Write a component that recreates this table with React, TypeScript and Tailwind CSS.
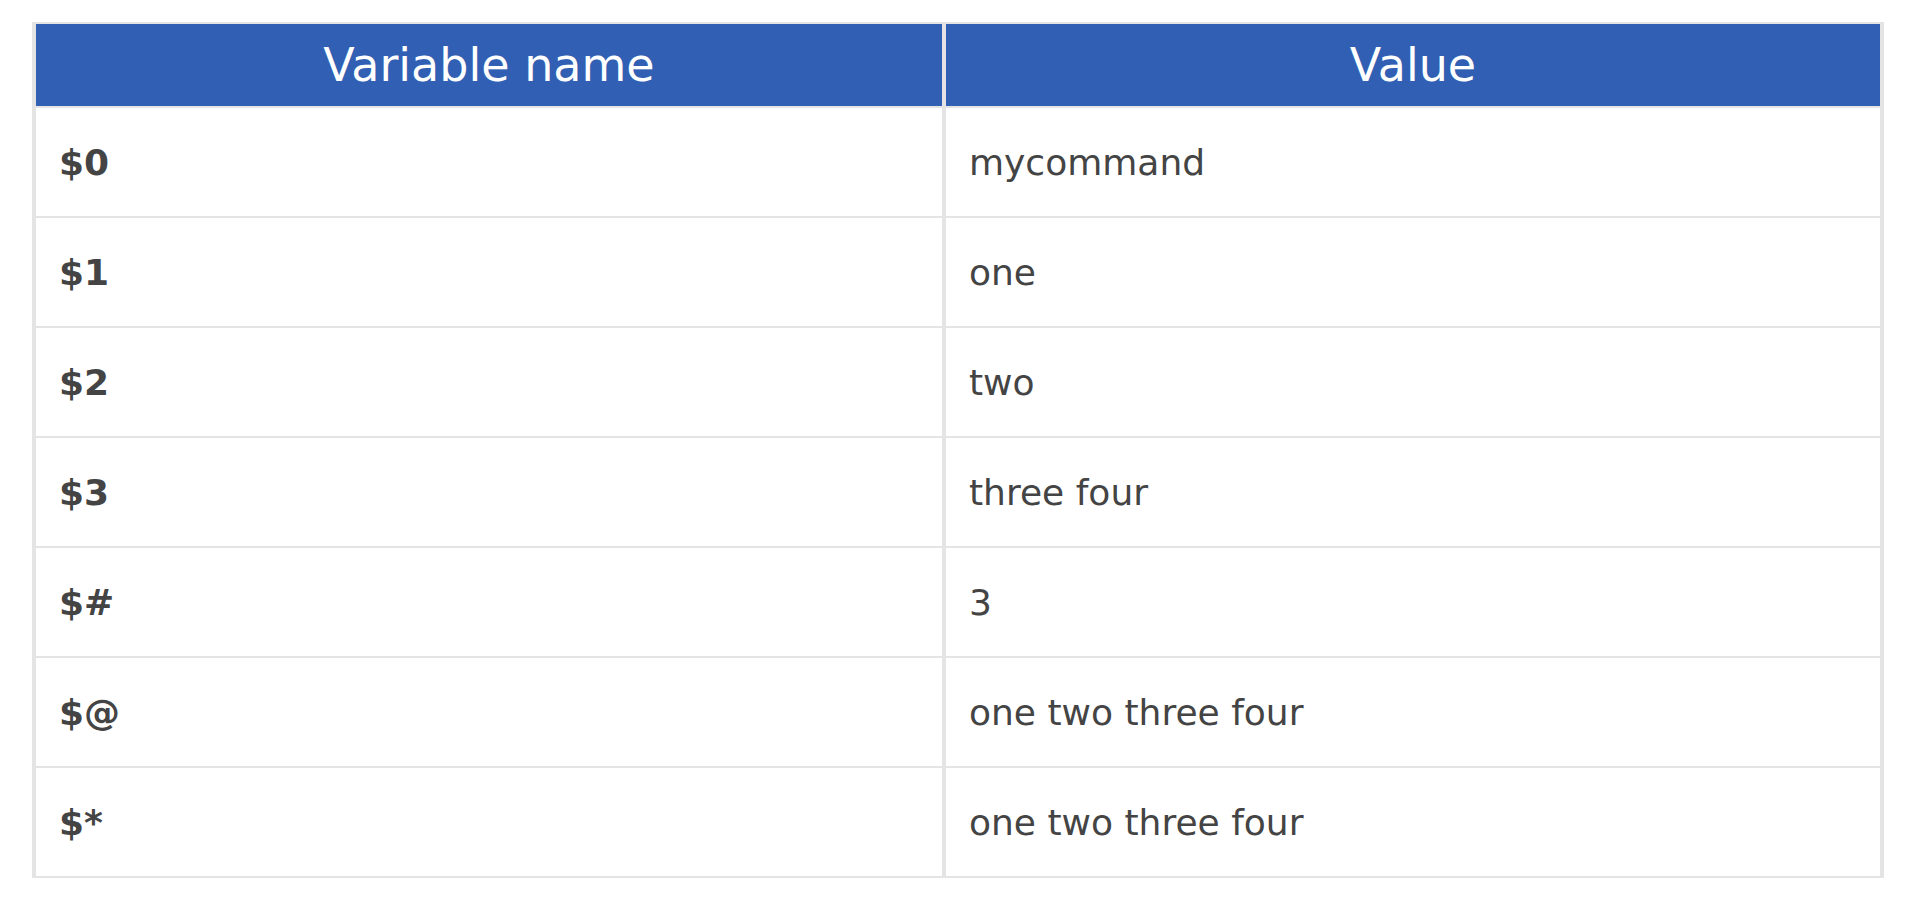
const rows: [string, string][] = [
  ['$0', 'mycommand'],
  ['$1', 'one'],
  ['$2', 'two'],
  ['$3', 'three four'],
  ['$#', '3'],
  ['$@', 'one two three four'],
  ['$*', 'one two three four'],
];

export default function App() {
  return (
    <div className="min-h-screen bg-white pt-[22px] pl-[32px] font-['DejaVu_Sans',sans-serif]">
      <div className="w-[1852px] border-x-4 border-y-2 border-[#e4e4e4]">
        {/* header */}
        <div className="flex h-[84px] border-b-2 border-[#e4e4e4] bg-[#305fb3] text-[46px] leading-none text-white">
          <div className="flex w-[910px] items-center justify-center border-r-4 border-[#e4e4e4]">
            Variable name
          </div>
          <div className="flex flex-1 items-center justify-center">Value</div>
        </div>

        {/* body */}
        {rows.map(([name, value], i) => (
          <div
            key={name}
            className={
              i < rows.length - 1
                ? 'flex h-[110px] border-b-2 border-[#e4e4e4] text-[36px] text-[#444444]'
                : 'flex h-[108px] text-[36px] text-[#444444]'
            }
          >
            <div className="flex w-[910px] items-center border-r-4 border-[#e4e4e4] pl-[23px] pt-[1px] font-bold">
              {name}
            </div>
            <div className="flex flex-1 items-center pl-[23px] pt-[1px]">{value}</div>
          </div>
        ))}
      </div>
    </div>
  );
}
